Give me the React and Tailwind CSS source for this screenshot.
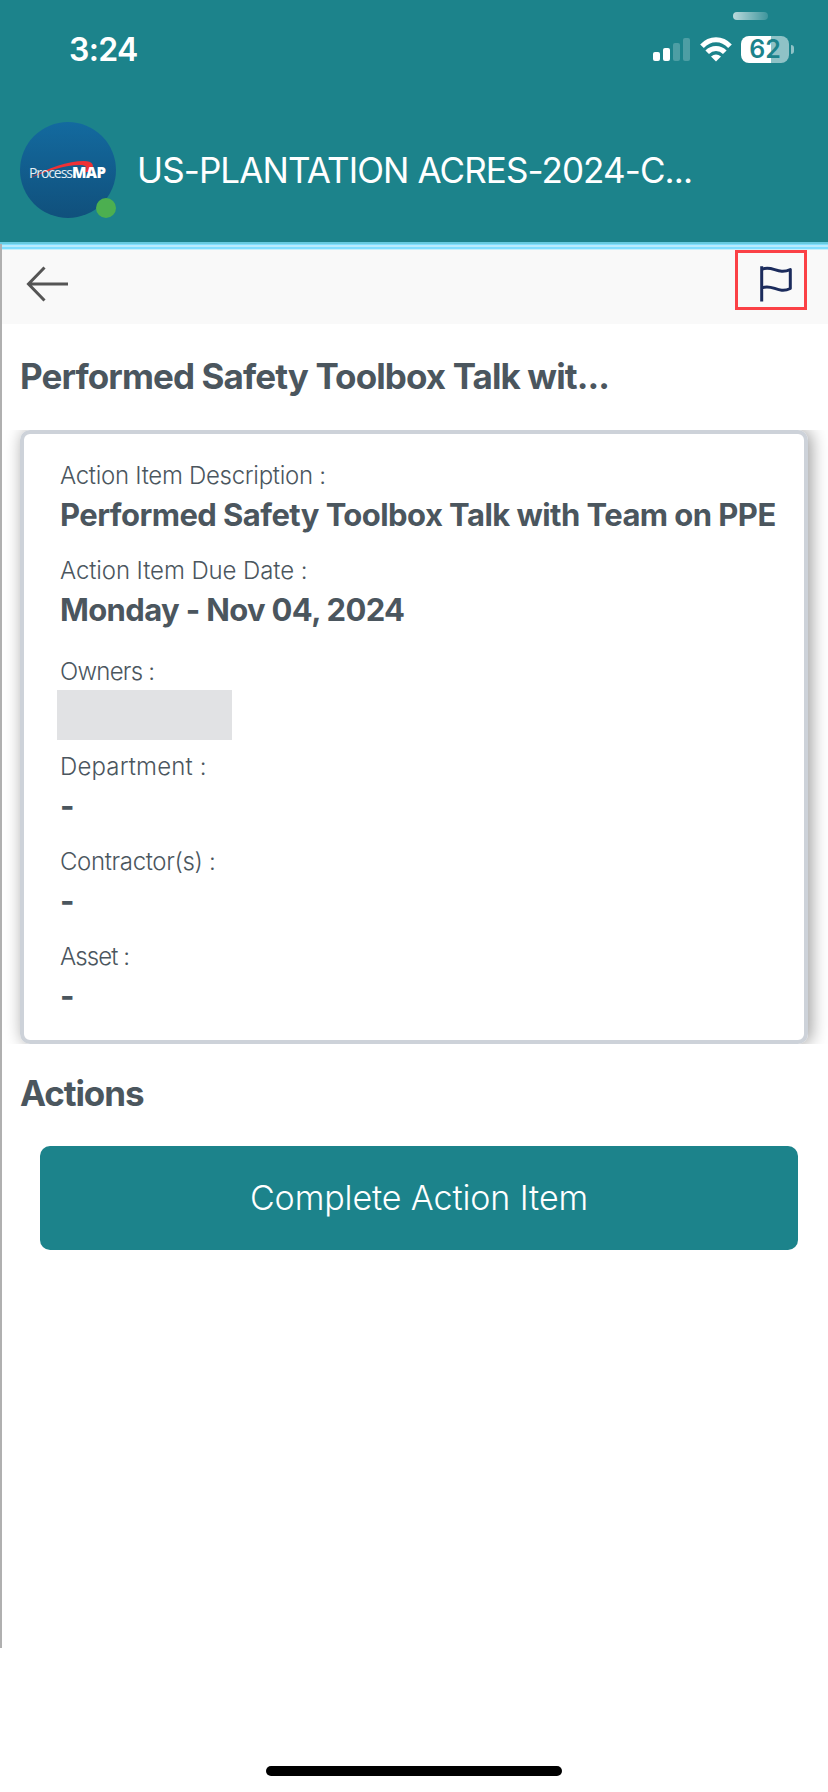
const fields = [
    { label: "Action Item Description :", value: "Performed Safety Toolbox Talk with Team on PPE", labelClass: "tracking-[-0.3px]", valueClass: "mb-0 tracking-[-0.56px]" },
    { label: "Action Item Due Date :", value: "Monday - Nov 04, 2024", labelClass: "tracking-[-0.1px]", valueClass: "mb-1.5 tracking-[-0.65px]" },
    { label: "Owners :", redacted: true, labelClass: "tracking-[-0.75px]" },
    { label: "Department :", labelClass: "tracking-[0.15px]" },
    { label: "Contractor(s) :", labelClass: "tracking-[-0.35px]" },
    { label: "Asset :", labelClass: "tracking-[-0.9px]" },
];

function StatusBar() {
    return (
        <div className="flex justify-between pl-[69px] pr-[34px] h-[120px]">
            <span className="mt-[30px] h-10 leading-10 text-[32px] font-semibold tracking-[-0.7px]">3:24</span>
            <div className="relative flex items-start gap-[9px] pt-9">
                <div className="absolute left-[80px] top-3 w-[35px] h-2 rounded-full bg-linear-to-r from-white/70 to-white/15" />
                <svg width="38" height="26" viewBox="0 0 38 26" fill="#fff">
                    <rect x="0" y="16" width="7" height="9" rx="2" />
                    <rect x="10" y="12" width="7" height="13" rx="2" />
                    <rect x="20" y="7" width="7" height="18" rx="2" opacity=".22" />
                    <rect x="30" y="2" width="7" height="23" rx="2" opacity=".22" />
                </svg>
                <svg width="32" height="26" viewBox="0 0 32 26" fill="none" stroke="#fff" strokeWidth="5">
                    <path d="M2 10.2 C10 1.6 22 1.6 30 10.2" />
                    <path d="M7.2 16.2 C12 11.2 20 11.2 24.8 16.2" />
                    <path d="M11 20.6 Q16 16.6 21 20.6 L16 25.4 Z" fill="#fff" stroke="none" />
                </svg>
                <div className="flex items-center gap-0.5">
                    <div className="w-12 h-[27px] rounded-lg bg-[linear-gradient(90deg,#fff_62.5%,#8fc2c6_62.5%)] text-[#1c838b] text-center text-[25px] leading-[27px] font-semibold">
                        62
                    </div>
                    <div className="w-[3px] h-[9px] rounded-r-full bg-[#8fc2c6]" />
                </div>
            </div>
        </div>
    );
}

function Avatar() {
    return (
        <div className="relative w-24 h-24 shrink-0 rounded-full bg-linear-to-b from-[#136a9f] to-[#10507c]">
            <svg className="absolute inset-0" width="96" height="96" viewBox="0 0 96 96">
                <path d="M10 56 C28 46 48 39 64 39 C73 39 75 43 71 50 L65 50 C68 45 66 43 60 43 C45 43 27 49 10 56 Z" fill="#ee3135" />
            </svg>
            <div className="absolute left-[9px] top-[40px] flex items-baseline h-5 leading-5 font-['Open_Sans',sans-serif]">
                <span className="w-[43px] text-[14px] tracking-[-1.1px] text-[#e4eef5]">Process</span>
                <span className="text-[15px] font-extrabold tracking-[-0.5px]">MAP</span>
            </div>
            <span className="absolute right-0 bottom-0 w-5 h-5 rounded-full bg-[#4caf50]" />
        </div>
    );
}

function Field({ label, value = "-", redacted, labelClass, valueClass = "" }) {
    return (
        <div>
            <p className={`h-[35px] leading-[35px] text-2xl font-light whitespace-nowrap ${labelClass}`}>{label}</p>
            {redacted ? (
                <div className="-ml-[3px] mt-px mb-[9px] w-[175px] h-[50px] bg-[#e1e2e4]" />
            ) : (
                <p className={`pt-0.5 h-[60px] leading-10 text-[31px] font-bold whitespace-nowrap ${valueClass}`}>{value}</p>
            )}
        </div>
    );
}

export default function App() {
    return (
        <div className="flex flex-col w-[828px] h-[1792px] overflow-hidden bg-white text-[#4b565e] font-[Inter,sans-serif]">
            <header className="h-[244px] bg-[#1c838b] text-white border-b-2 border-[#66cbe0]">
                <StatusBar />
                <div className="flex items-center gap-[21px] mt-0.5 pl-5">
                    <Avatar />
                    <h1 className="text-[35px] leading-[48px] whitespace-nowrap tracking-[-0.9px]">US-PLANTATION ACRES-2024-C...</h1>
                </div>
            </header>

            <main className="h-[1404px] border-l-2 border-[#b0b0b0]">
                <div className="h-1.5 bg-[linear-gradient(#80deff_0_1px,#b9ecfd_1px_3px,#80deff_3px_5px,#c8f0fb_5px)]" />
                <div className="flex justify-between h-[74px] pl-6 pr-[19px] bg-[#f9f9f9]">
                    <svg className="mt-4" width="43" height="36" viewBox="0 0 43 36" fill="none" stroke="#555" strokeWidth="3">
                        <path d="M18.5 1.5 L2.5 18 L18.5 34.5 M2 18 H42" />
                    </svg>
                    <button className="w-[72px] h-[60px] mr-0.5 border-3 border-[#fb4146]">
                        <svg width="66" height="54" viewBox="0 0 66 54" fill="none" stroke="#1b2b5c" strokeWidth="3" strokeLinejoin="round">
                            <path d="M23.7 13.3 V48.5 M23.7 16.5 C34 11.5 40 22.5 52.3 16.5 V35.5 C40 41.5 34 30 23.7 35" />
                        </svg>
                    </button>
                </div>

                <h2 className="mt-[28px] ml-[18px] h-[49px] leading-[48px] text-[35px] font-bold whitespace-nowrap tracking-[-0.9px]">
                    Performed Safety Toolbox Talk wit...
                </h2>

                <div className="mt-[29px] pl-[18px] pr-5 h-[614px] overflow-hidden">
                    <section className="h-full pt-[24px] pl-9 rounded-[10px] border-4 border-[#cdd2d9] shadow-[3px_0_17px_rgba(0,0,0,0.4)]">
                        {fields.map(field => (
                            <Field key={field.label} {...field} />
                        ))}
                    </section>
                </div>

                <h2 className="mt-[25px] ml-[18px] h-[48px] leading-[48px] text-[35px] font-bold tracking-[-1.1px]">Actions</h2>
                <button className="block mt-[29px] ml-[38px] pb-0.5 w-[758px] h-[104px] rounded-[10px] bg-[#1c838b] text-white text-[34px] font-light tracking-[-0.1px]">
                    Complete Action Item
                </button>
            </main>

            <div className="mt-[118px] mx-auto w-[296px] h-[10px] rounded-full bg-black" />
        </div>
    );
}
